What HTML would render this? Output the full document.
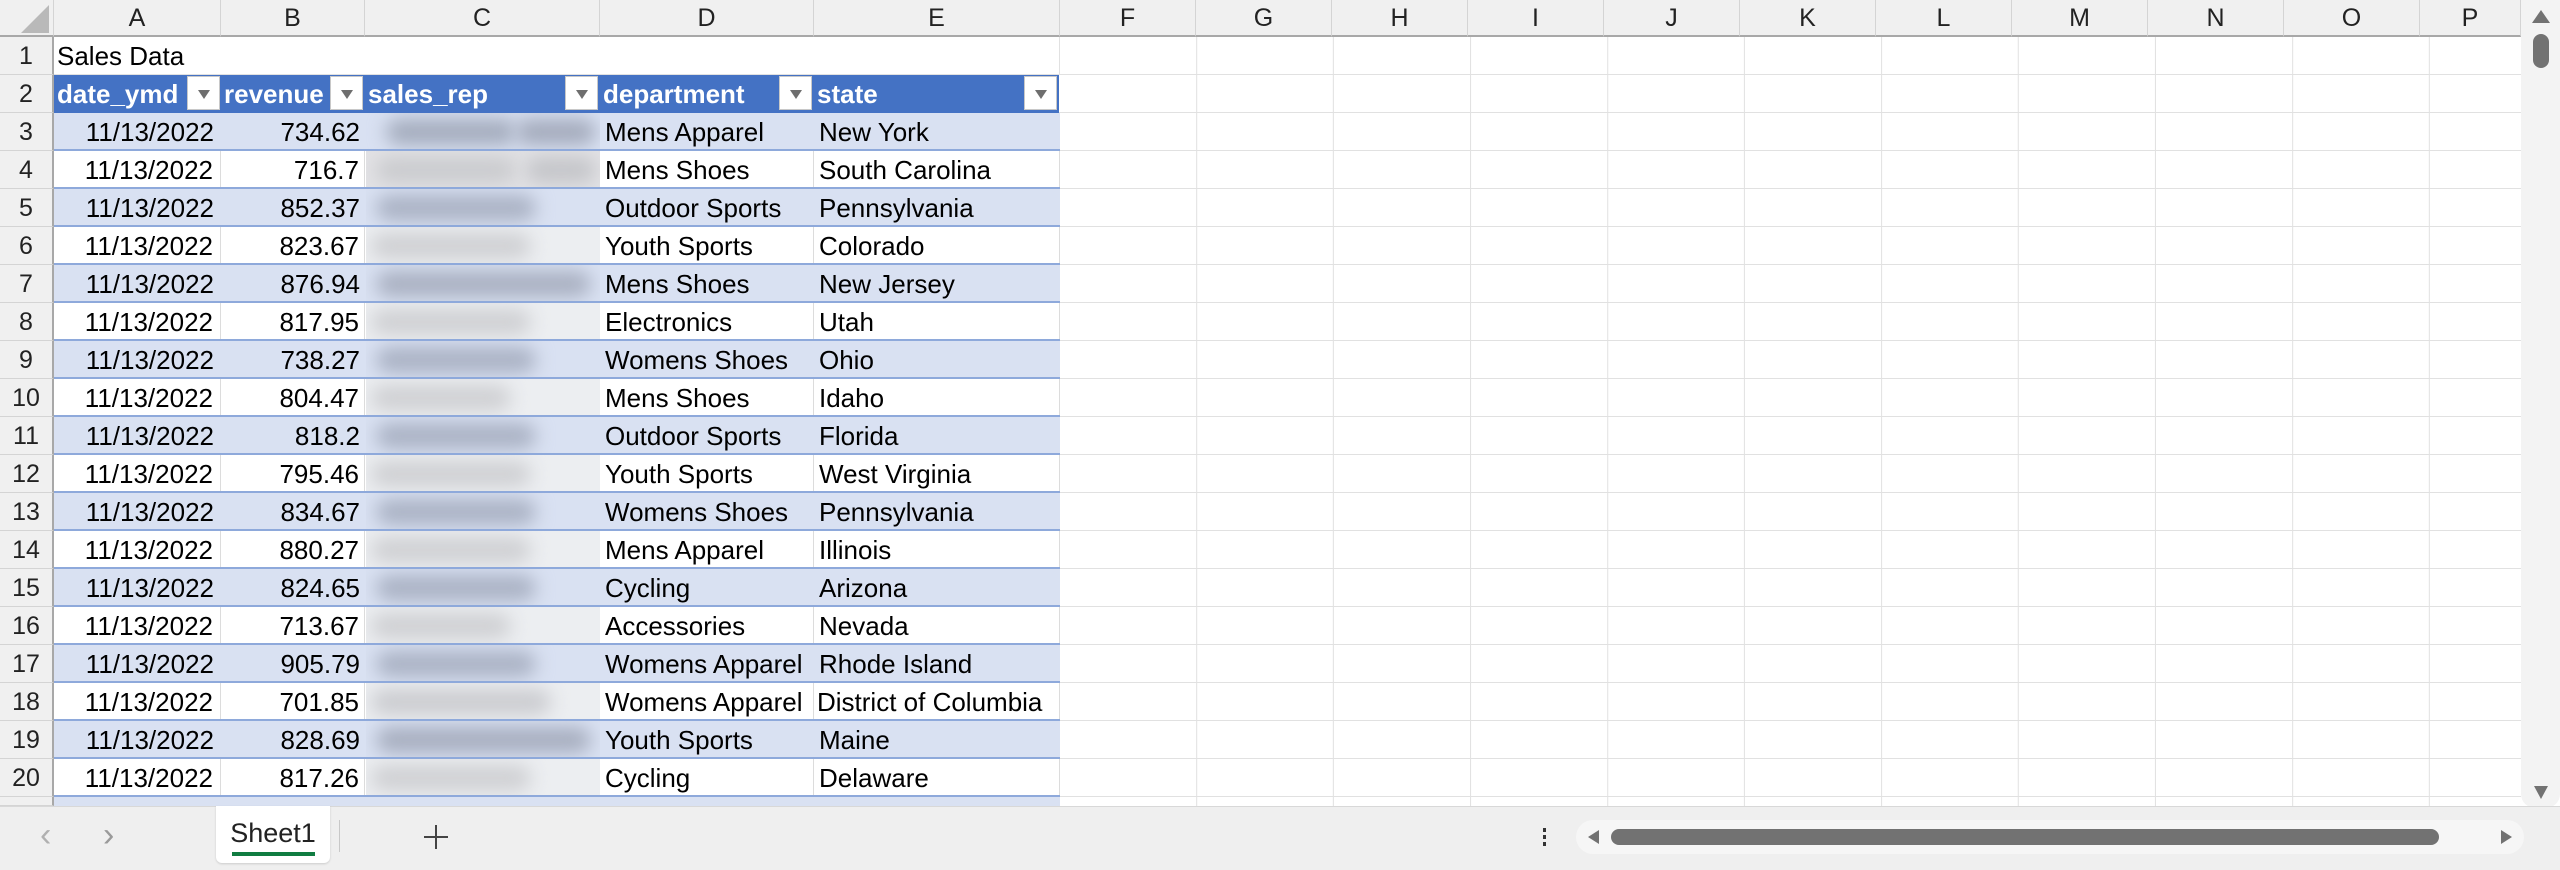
<!DOCTYPE html>
<html><head><meta charset="utf-8"><style>
*{margin:0;padding:0;box-sizing:border-box}
body{width:2560px;height:870px;overflow:hidden;background:#fff;font-family:"Liberation Sans",Arial,sans-serif;position:relative;font-size:26px;color:#000}
.abs{position:absolute}
.colhdr{position:absolute;top:0;height:37px;background:#f0f0f0;border-right:1px solid #d4d4d4;border-bottom:2px solid #a8a8a8;text-align:center;line-height:37px;font-size:25px;color:#222}
.row{position:absolute;left:0;width:1060px;height:38px}
.rh{position:absolute;left:0;width:54px;height:38px;background:#f0f0f0;border-right:2px solid #a8a8a8;border-bottom:1px solid #d4d4d4;text-align:center;line-height:38px;font-size:25px;color:#222}
.c{position:absolute;top:0;height:36px;line-height:38px;white-space:nowrap;overflow:hidden;padding:0 5px}
.a{left:54px;width:167px;text-align:right;padding-right:7px}
.b{left:221px;width:144px;text-align:right}
.cc{left:365px;width:235px}
.d{left:600px;width:214px}
.e{left:814px;width:246px}
.s{background:#d9e1f2}
.w .a,.w .b,.w .d,.w .e{background:#fff;border-right:1px solid #dcdcdc}
.data{border-bottom:2px solid #8ea9db}
.hd .c{background:#4472c4;color:#fff;font-weight:bold;padding-left:3px;height:38px}
.fb{position:absolute;top:1px;width:33px;height:34px;background:#fff;border:1px solid #c8c8c8}
.fb:after{content:"";position:absolute;left:10px;top:13px;border-left:6px solid transparent;border-right:6px solid transparent;border-top:9px solid #6e6e6e}
.blur{position:absolute;top:0;left:366px;width:234px;height:36px;overflow:hidden}
.blur i{position:absolute;top:6px;height:26px;border-radius:13px;filter:blur(9px)}
</style></head><body>
<div class="abs" style="left:1059px;top:37px;width:1462px;height:769px;background-image:repeating-linear-gradient(to right,transparent 0,transparent 136px,#e1e1e1 136px,#e1e1e1 137px),repeating-linear-gradient(to bottom,transparent 0,transparent 37px,#e1e1e1 37px,#e1e1e1 38px);background-position:1px 0,0 0"></div>
<div class="colhdr" style="left:0;width:54px"><div class="abs" style="left:21px;top:5px;width:0;height:0;border-left:28px solid transparent;border-bottom:28px solid #b9b9b9"></div></div>
<div class="colhdr" style="left:54px;width:167px">A</div>
<div class="colhdr" style="left:221px;width:144px">B</div>
<div class="colhdr" style="left:365px;width:235px">C</div>
<div class="colhdr" style="left:600px;width:214px">D</div>
<div class="colhdr" style="left:814px;width:246px">E</div>
<div class="colhdr" style="left:1060px;width:136px">F</div>
<div class="colhdr" style="left:1196px;width:136px">G</div>
<div class="colhdr" style="left:1332px;width:136px">H</div>
<div class="colhdr" style="left:1468px;width:136px">I</div>
<div class="colhdr" style="left:1604px;width:136px">J</div>
<div class="colhdr" style="left:1740px;width:136px">K</div>
<div class="colhdr" style="left:1876px;width:136px">L</div>
<div class="colhdr" style="left:2012px;width:136px">M</div>
<div class="colhdr" style="left:2148px;width:136px">N</div>
<div class="colhdr" style="left:2284px;width:136px">O</div>
<div class="colhdr" style="left:2420px;width:101px">P</div>

<div class="row" style="top:37px;border-bottom:1px solid #e1e1e1"><div class="rh">1</div><div class="c" style="left:54px;padding-left:3px">Sales Data</div><div class="abs" style="left:1059px;top:0;width:1px;height:38px;background:#e1e1e1"></div></div>
<div class="row hd" style="top:75px"><div class="rh">2</div>
<div class="c a" style="text-align:left">date_ymd<div class="fb" style="left:133px"></div></div>
<div class="c b" style="text-align:left">revenue<div class="fb" style="left:109px"></div></div>
<div class="c cc">sales_rep<div class="fb" style="left:200px"></div></div>
<div class="c d">department<div class="fb" style="left:179px"></div></div>
<div class="c e" style="width:245px">state<div class="fb" style="left:210px"></div></div>
</div>

<div class="row data s" style="top:113px"><div class="rh">3</div><div class="c a">11/13/2022</div><div class="c b">734.62</div><div class="blur"><i style="left:20px;width:130px;background:#a4acbd"></i><i style="left:150px;width:80px;background:#a4abbc"></i></div><div class="c d">Mens Apparel</div><div class="c e">New York</div></div>
<div class="row data w" style="top:151px"><div class="rh">4</div><div class="c a">11/13/2022</div><div class="c b">716.7</div><div class="blur" style="background:#e2e2e5"><i style="left:10px;width:140px;background:#cacbce"></i><i style="left:160px;width:70px;background:#c4c5c9"></i></div><div class="c d">Mens Shoes</div><div class="c e">South Carolina</div></div>
<div class="row data s" style="top:189px"><div class="rh">5</div><div class="c a">11/13/2022</div><div class="c b">852.37</div><div class="blur"><i style="left:10px;width:160px;background:#aab2c4"></i></div><div class="c d">Outdoor Sports</div><div class="c e">Pennsylvania</div></div>
<div class="row data w" style="top:227px"><div class="rh">6</div><div class="c a">11/13/2022</div><div class="c b">823.67</div><div class="blur" style="background:#eceef1"><i style="left:5px;width:160px;background:#cfd0d3"></i></div><div class="c d">Youth Sports</div><div class="c e">Colorado</div></div>
<div class="row data s" style="top:265px"><div class="rh">7</div><div class="c a">11/13/2022</div><div class="c b">876.94</div><div class="blur"><i style="left:10px;width:215px;background:#a9b0c1"></i></div><div class="c d">Mens Shoes</div><div class="c e">New Jersey</div></div>
<div class="row data w" style="top:303px"><div class="rh">8</div><div class="c a">11/13/2022</div><div class="c b">817.95</div><div class="blur" style="background:#eceef1"><i style="left:5px;width:160px;background:#cfd0d3"></i></div><div class="c d">Electronics</div><div class="c e">Utah</div></div>
<div class="row data s" style="top:341px"><div class="rh">9</div><div class="c a">11/13/2022</div><div class="c b">738.27</div><div class="blur"><i style="left:10px;width:160px;background:#aab2c4"></i></div><div class="c d">Womens Shoes</div><div class="c e">Ohio</div></div>
<div class="row data w" style="top:379px"><div class="rh">10</div><div class="c a">11/13/2022</div><div class="c b">804.47</div><div class="blur" style="background:#eceef1"><i style="left:5px;width:140px;background:#cfd0d3"></i></div><div class="c d">Mens Shoes</div><div class="c e">Idaho</div></div>
<div class="row data s" style="top:417px"><div class="rh">11</div><div class="c a">11/13/2022</div><div class="c b">818.2</div><div class="blur"><i style="left:10px;width:160px;background:#aab2c4"></i></div><div class="c d">Outdoor Sports</div><div class="c e">Florida</div></div>
<div class="row data w" style="top:455px"><div class="rh">12</div><div class="c a">11/13/2022</div><div class="c b">795.46</div><div class="blur" style="background:#eceef1"><i style="left:5px;width:160px;background:#cfd0d3"></i></div><div class="c d">Youth Sports</div><div class="c e">West Virginia</div></div>
<div class="row data s" style="top:493px"><div class="rh">13</div><div class="c a">11/13/2022</div><div class="c b">834.67</div><div class="blur"><i style="left:10px;width:160px;background:#aab2c4"></i></div><div class="c d">Womens Shoes</div><div class="c e">Pennsylvania</div></div>
<div class="row data w" style="top:531px"><div class="rh">14</div><div class="c a">11/13/2022</div><div class="c b">880.27</div><div class="blur" style="background:#eceef1"><i style="left:5px;width:160px;background:#cfd0d3"></i></div><div class="c d">Mens Apparel</div><div class="c e">Illinois</div></div>
<div class="row data s" style="top:569px"><div class="rh">15</div><div class="c a">11/13/2022</div><div class="c b">824.65</div><div class="blur"><i style="left:10px;width:160px;background:#aab2c4"></i></div><div class="c d">Cycling</div><div class="c e">Arizona</div></div>
<div class="row data w" style="top:607px"><div class="rh">16</div><div class="c a">11/13/2022</div><div class="c b">713.67</div><div class="blur" style="background:#eceef1"><i style="left:5px;width:140px;background:#cfd0d3"></i></div><div class="c d">Accessories</div><div class="c e">Nevada</div></div>
<div class="row data s" style="top:645px"><div class="rh">17</div><div class="c a">11/13/2022</div><div class="c b">905.79</div><div class="blur"><i style="left:10px;width:160px;background:#aab2c4"></i></div><div class="c d">Womens Apparel</div><div class="c e">Rhode Island</div></div>
<div class="row data w" style="top:683px"><div class="rh">18</div><div class="c a">11/13/2022</div><div class="c b">701.85</div><div class="blur" style="background:#eceef1"><i style="left:5px;width:180px;background:#cbccd0"></i></div><div class="c d">Womens Apparel</div><div class="c e" style="padding-left:3px">District of Columbia</div></div>
<div class="row data s" style="top:721px"><div class="rh">19</div><div class="c a">11/13/2022</div><div class="c b">828.69</div><div class="blur"><i style="left:10px;width:215px;background:#a7aebf"></i></div><div class="c d">Youth Sports</div><div class="c e">Maine</div></div>
<div class="row data w" style="top:759px"><div class="rh">20</div><div class="c a">11/13/2022</div><div class="c b">817.26</div><div class="blur" style="background:#eceef1"><i style="left:5px;width:160px;background:#cfd0d3"></i></div><div class="c d">Cycling</div><div class="c e">Delaware</div></div>
<div class="row s" style="top:797px;height:9px"><div class="rh" style="height:9px"></div></div>

<div class="abs" style="left:2521px;top:0;width:39px;height:808px;background:#f3f3f3;border-radius:0 0 14px 14px"></div>
<div class="abs" style="left:2532px;top:10px;width:0;height:0;border-left:9px solid transparent;border-right:9px solid transparent;border-bottom:13px solid #727272"></div>
<div class="abs" style="left:2533px;top:34px;width:16px;height:34px;border-radius:8px;background:#727272"></div>
<div class="abs" style="left:2534px;top:786px;width:0;height:0;border-left:7px solid transparent;border-right:7px solid transparent;border-top:13px solid #727272"></div>

<div class="abs" style="left:0;top:806px;width:2560px;height:64px;background:#efefef;border-top:1px solid #d8d8d8"></div>
<div class="abs" style="left:40px;top:816px;font-size:34px;color:#b0b0b0">&#x2039;</div>
<div class="abs" style="left:103px;top:816px;font-size:34px;color:#9a9a9a">&#x203A;</div>
<div class="abs" style="left:216px;top:806px;width:114px;height:57px;background:#fff;border-radius:0 0 6px 6px;box-shadow:0 1px 2px rgba(0,0,0,.15)"></div>
<div class="abs" style="left:216px;top:818px;width:114px;text-align:center;font-size:27px;color:#222">Sheet1</div>
<div class="abs" style="left:232px;top:852px;width:83px;height:4px;background:#107c41"></div>
<div class="abs" style="left:339px;top:820px;width:1px;height:32px;background:#c8c8c8"></div>
<div class="abs" style="left:424px;top:836px;width:24px;height:2px;background:#444"></div>
<div class="abs" style="left:435px;top:825px;width:2px;height:24px;background:#444"></div>
<div class="abs" style="left:1543px;top:828px;width:3px;height:4px;background:#333;box-shadow:0 7px 0 #333,0 14px 0 #333"></div>
<div class="abs" style="left:1576px;top:820px;width:948px;height:34px;background:#f6f6f6;border-radius:17px"></div>
<div class="abs" style="left:1588px;top:830px;width:0;height:0;border-top:7px solid transparent;border-bottom:7px solid transparent;border-right:11px solid #727272"></div>
<div class="abs" style="left:1611px;top:829px;width:828px;height:16px;border-radius:8px;background:#727272"></div>
<div class="abs" style="left:2501px;top:830px;width:0;height:0;border-top:7px solid transparent;border-bottom:7px solid transparent;border-left:11px solid #727272"></div>
</body></html>
